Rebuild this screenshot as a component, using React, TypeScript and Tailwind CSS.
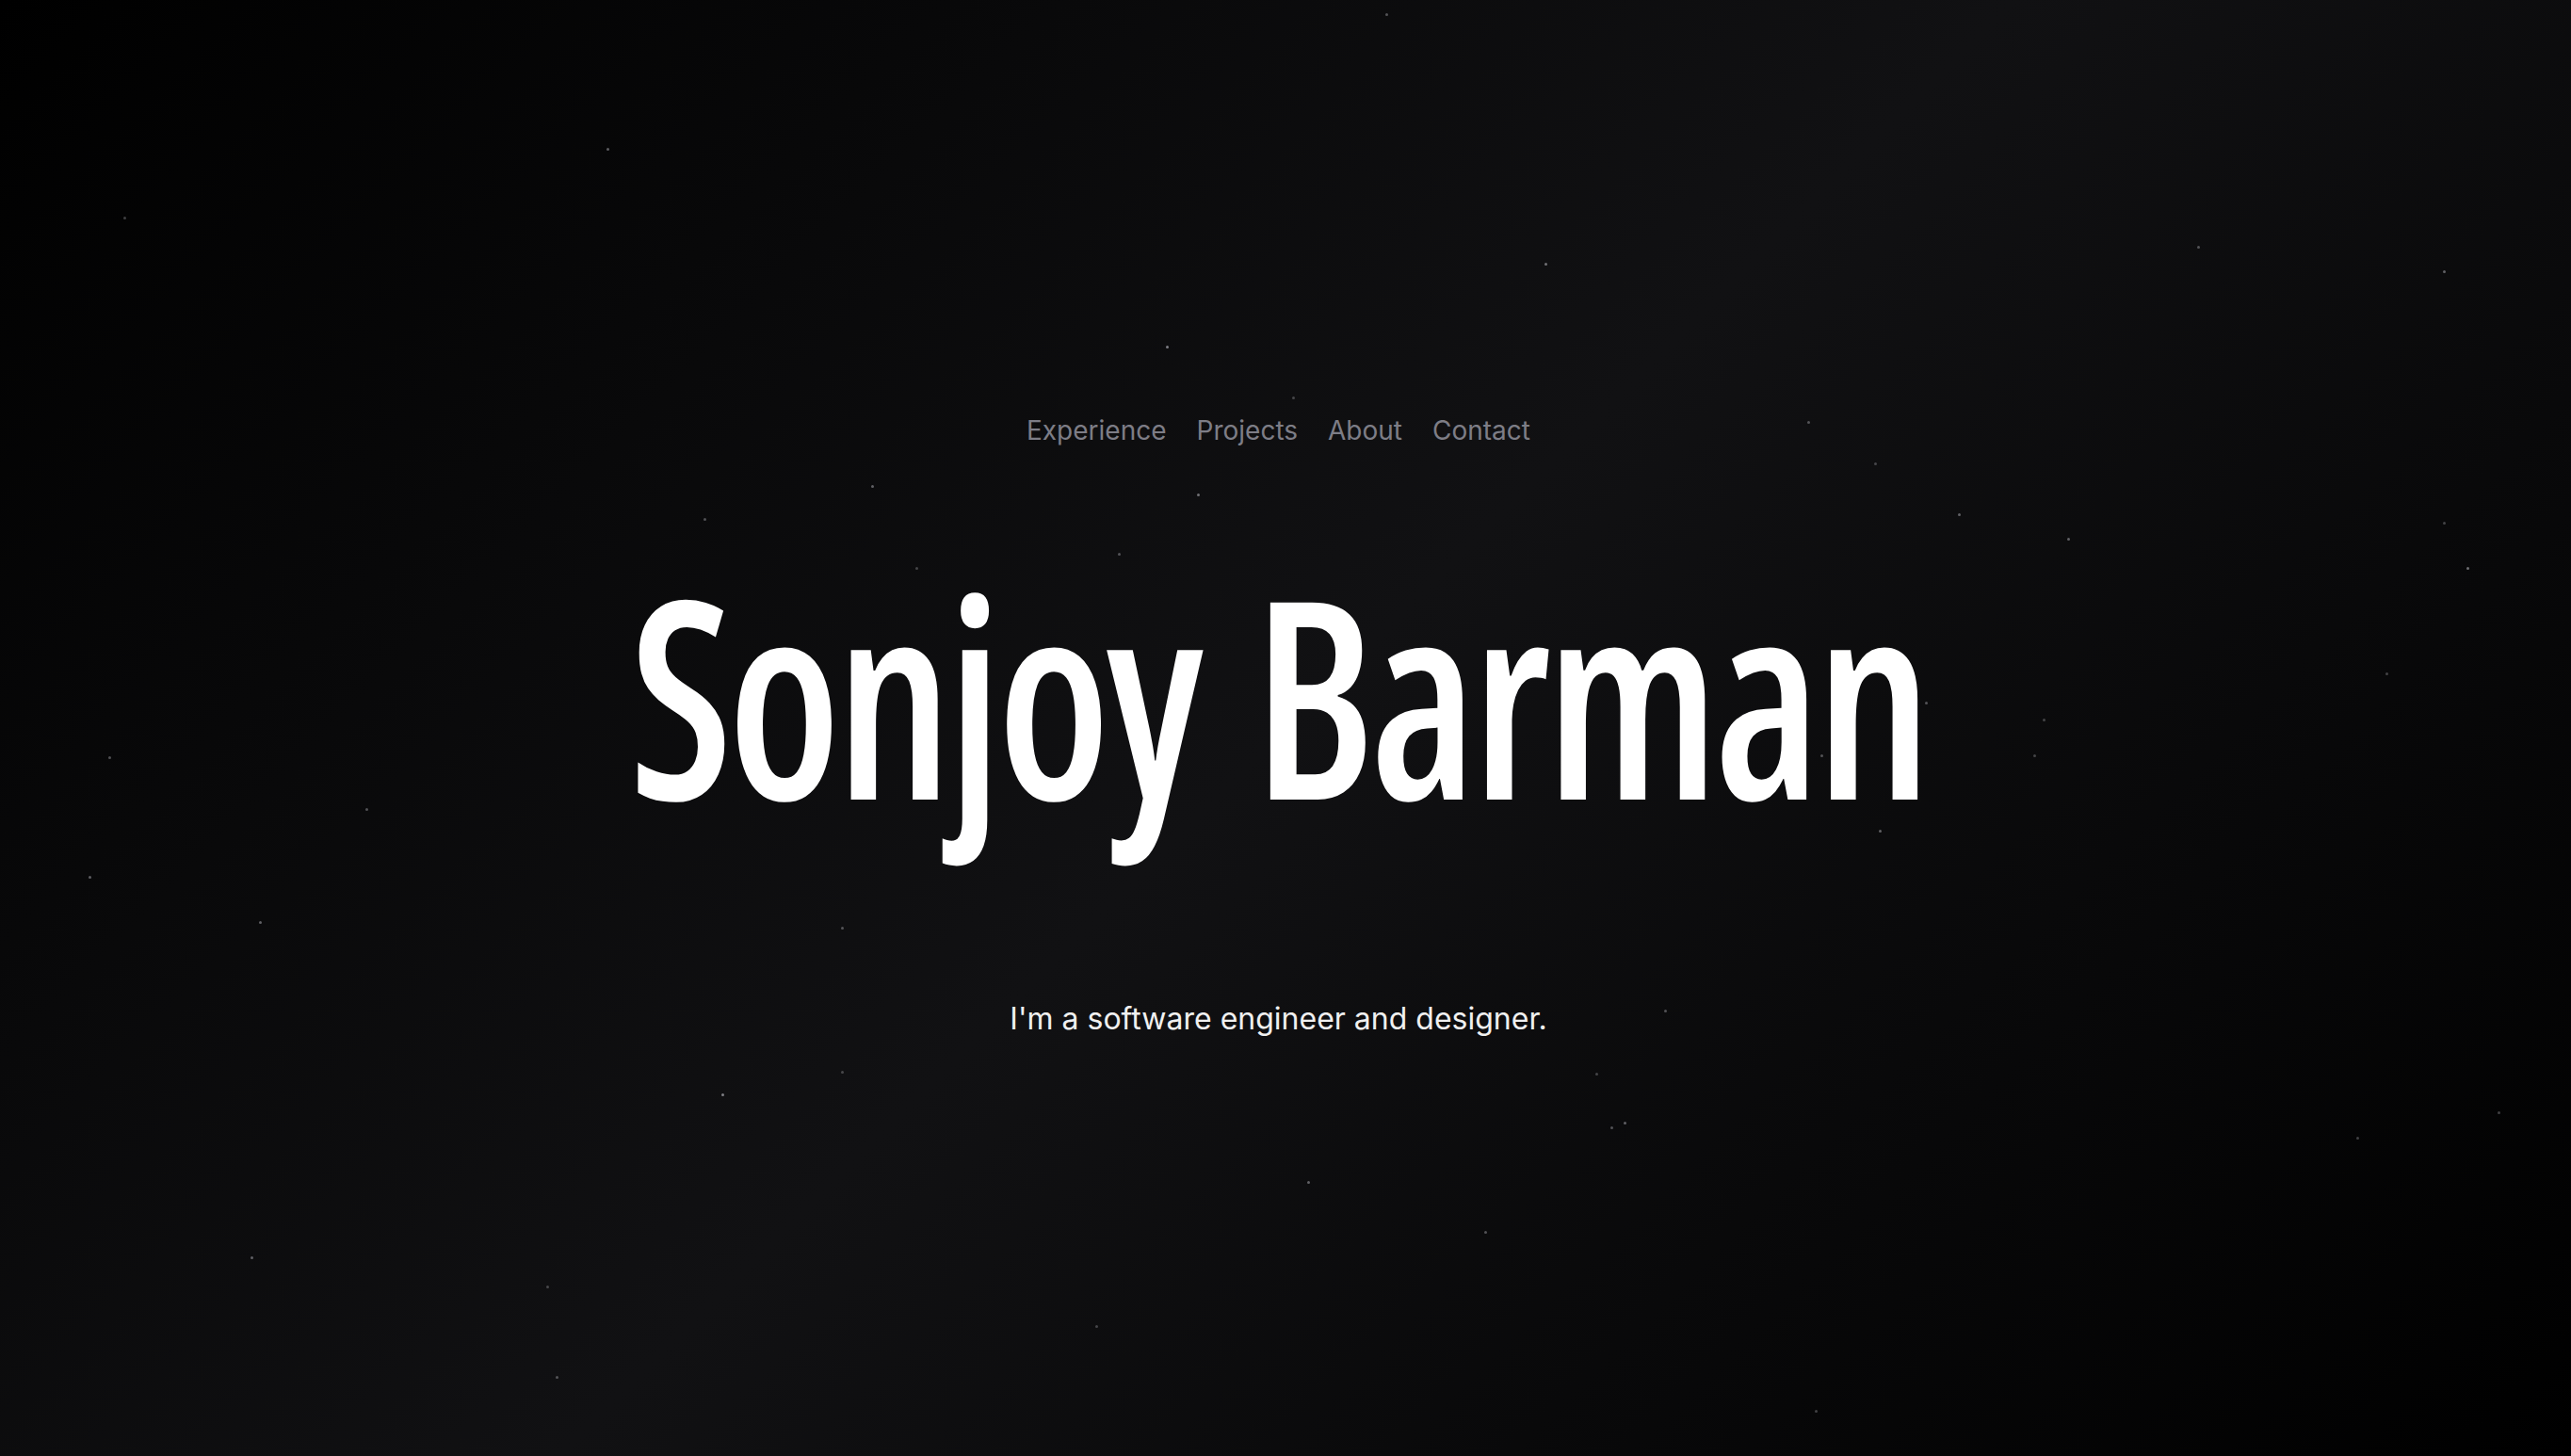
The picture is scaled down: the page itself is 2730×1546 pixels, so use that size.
// Hero landing: starfield backdrop, small nav, big condensed name, tagline.
const stars: [number, number, number][] = [
  [845, 8, 0.5], [370, 90, 0.6], [75, 132, 0.4], [942, 160, 0.7], [1340, 150, 0.5],
  [1490, 165, 0.6], [711, 211, 0.8], [788, 242, 0.4], [1102, 257, 0.5], [1143, 282, 0.4],
  [531, 296, 0.6], [730, 301, 0.7], [429, 316, 0.5], [1194, 313, 0.6], [1261, 328, 0.6],
  [682, 337, 0.5], [558, 346, 0.4], [1490, 318, 0.4], [1504, 346, 0.7], [1455, 410, 0.4],
  [1246, 438, 0.4], [1174, 428, 0.5], [1240, 460, 0.4], [1110, 460, 0.5], [1030, 445, 0.4],
  [66, 461, 0.5], [223, 493, 0.5], [1146, 506, 0.6], [54, 534, 0.6], [158, 562, 0.6],
  [513, 565, 0.5], [1015, 616, 0.5], [513, 653, 0.4], [973, 654, 0.4], [440, 667, 0.8],
  [990, 684, 0.6], [982, 687, 0.5], [1523, 678, 0.4], [1437, 693, 0.4], [797, 720, 0.6],
  [905, 751, 0.5], [153, 766, 0.6], [333, 784, 0.4], [668, 808, 0.4], [339, 839, 0.5],
  [1107, 860, 0.4],
];

const links = ["Experience", "Projects", "About", "Contact"];

function Starfield() {
  return (
    <div className="absolute inset-0 pointer-events-none">
      {stars.map(([x, y, o], i) => (
        <span
          key={i}
          className="absolute w-[3px] h-[3px] rounded-full bg-[#9a9aa0]"
          style={{ left: `${(x / 1568) * 100}%`, top: `${(y / 888) * 100}%`, opacity: o }}
        />
      ))}
    </div>
  );
}

export default function App() {
  return (
    <div className="relative min-h-screen h-[1546px] overflow-hidden bg-[linear-gradient(135deg,#000000_0%,#111113_50%,#000000_100%)] font-['Inter',sans-serif]">
      <Starfield />
      <main className="relative flex flex-col items-center pt-[436px] pr-[15px]">
        <nav className="flex items-center gap-8 text-[28px] leading-[42px] text-[#7d7d86]">
          {links.map((l) => (
            <a key={l} href={`#${l.toLowerCase()}`} className="hover:text-white">
              {l}
            </a>
          ))}
        </nav>
        <h1 className="mt-[111px] text-white text-[293px] leading-[293px] [font-weight:560] tracking-[-0.02em] [word-spacing:0.06em] scale-x-[0.883] [font-stretch:75%] font-['Open_Sans',sans-serif]">
          Sonjoy Barman
        </h1>
        <p className="mt-[177px] text-[32px] leading-[45px] text-[#f0f0f0]">
          I'm a software engineer and designer.
        </p>
      </main>
    </div>
  );
}
